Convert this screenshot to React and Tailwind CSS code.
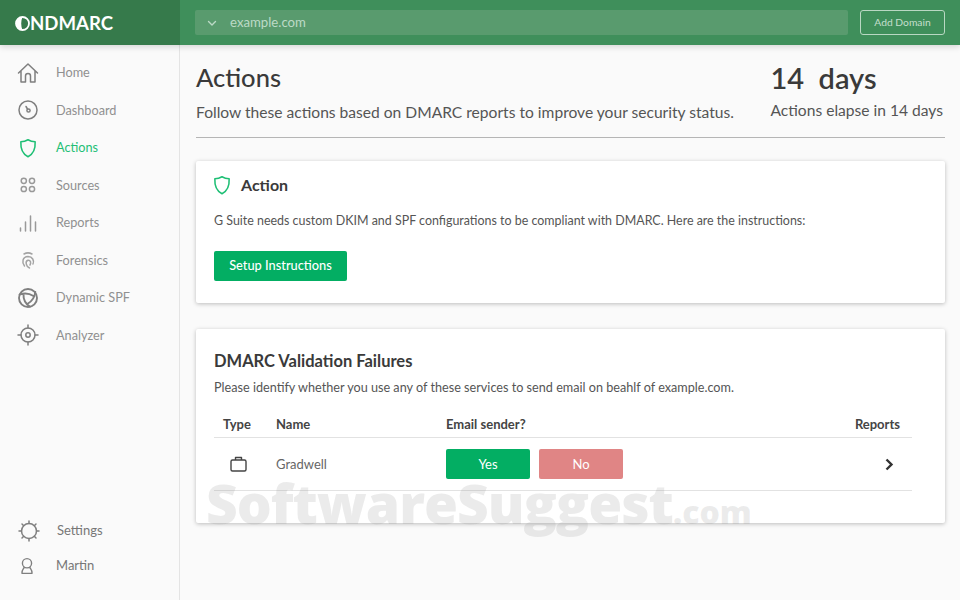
import React from "react";

const I = ({ children, className = "", size = 24, sw = 1.5 }) => (
  <svg width={size} height={size} viewBox="0 0 24 24" fill="none" stroke="currentColor" strokeWidth={sw} strokeLinecap="round" strokeLinejoin="round" className={className}>
    {children}
  </svg>
);

const Shield = ({ size = 24, className = "" }) => (
  <I size={size} sw={1.7} className={`text-[#1fbf75] ${className}`}>
    <path d="M12 3 C9.5 4.6 7 5.2 4.2 5.2 C3.8 12.5 6 18.5 12 21.5 C18 18.5 20.2 12.5 19.8 5.2 C17 5.2 14.5 4.6 12 3 Z" />
  </I>
);

const icons = {
  Home: <path d="M2.5 12 L12 3 L21.5 12 M5 10 V21 H9.5 V15 A2.5 2.5 0 0 1 14.5 15 V21 H19 V10" />,
  Dashboard: (<><circle cx="12" cy="12" r="9" /><circle cx="12.5" cy="12.5" r="1.6" /><path d="M11.5 11 L10 8.5" /></>),
  Actions: null,
  Sources: (<><circle cx="7.8" cy="7.8" r="2.6" /><circle cx="16" cy="7.8" r="2.6" /><circle cx="7.8" cy="16" r="2.6" /><circle cx="16" cy="16" r="2.6" /></>),
  Reports: <path d="M4.5 20 V17 M9.5 20 V11 M14.5 20 V5 M19.5 20 V11" />,
  Forensics: (<><path d="M8 6 C10.5 4.6 13.5 4.6 16 6" /><path d="M8.5 18 C5.5 14 6.5 9 12 8.6 C16.5 8.6 18.5 12.5 17 16" /><path d="M13.5 20 C10 18.5 8.8 13 12 12.2 C14.8 12 15.2 15 14 17" /></>),
  "Dynamic SPF": (<><circle cx="12" cy="12" r="9" /><path d="M3.6 8.6 Q11 6 17.5 10 M19.3 6 Q18.5 13.5 12 17.5 M14 20.8 Q7 16 7.5 8" /></>),
  Analyzer: (<><circle cx="12" cy="12" r="7" /><circle cx="12" cy="12" r="2.2" /><path d="M12 2 V5 M12 19 V22 M2 12 H5 M19 12 H22" /></>),
};

const muted = { Sources: "text-[#999]", Reports: "text-[#999]", Forensics: "text-[#a3a3a3]" };

const nav = ["Home", "Dashboard", "Actions", "Sources", "Reports", "Forensics", "Dynamic SPF", "Analyzer"];

function NavRow({ label, active }) {
  return (
    <div className="h-[37.5px] flex items-center pl-[16px]">
      <div className={`w-[24px] h-[24px] flex items-center justify-center ${active ? "" : muted[label] || "text-[#7f7f7f]"}`}>
        {label === "Actions" ? <Shield size={22} /> : <I sw={label === "Dynamic SPF" ? 1.9 : 1.5}>{icons[label]}</I>}
      </div>
      <span className={`ml-[16px] text-[12.7px] ${active ? "text-[#1fbf75]" : "text-[#909090]"}`}>{label}</span>
    </div>
  );
}

export default function App() {
  return (
    <div className="relative w-[960px] h-[600px] overflow-hidden bg-[#fafafa] text-[#3a3a3a] font-['Lato','Open_Sans',sans-serif]">
      <header className="relative z-10 h-[45px] flex shadow-[0_2px_6px_rgba(0,0,0,0.15)] bg-[#3f8f5b]">
        <div className="w-[180px] bg-[#367a4b] flex items-center pl-[15px] pt-[1px] text-white">
          <svg width="15" height="15" viewBox="0 0 15 15">
            <circle cx="7.5" cy="7.5" r="6.5" fill="none" stroke="#fff" strokeWidth="1.8" />
            <path d="M7.5 1 A6.5 6.5 0 0 0 7.5 14 C5.8 10.5 5.8 4.5 7.5 1 Z" fill="#fff" />
          </svg>
          <span className="text-[18.6px] font-bold leading-none">NDMARC</span>
        </div>
        <div className="flex-1 flex items-center pl-[15px] pr-[15px]">
          <div className="w-[653px] h-[25px] bg-[#599b6e] rounded-[2px] flex items-center pl-[11px] text-[#bcdac6]">
            <svg width="12" height="12" viewBox="0 0 12 12" fill="none" stroke="currentColor" strokeWidth="1.4" strokeLinecap="round" strokeLinejoin="round">
              <path d="M2.5 4.5 L6 8 L9.5 4.5" />
            </svg>
            <span className="ml-[12px] text-[13.2px]">example.com</span>
          </div>
          <button className="ml-[12px] w-[85px] h-[25px] rounded-[3px] border border-[#b9d8c3] text-[#c5dfcd] text-[10.3px] flex items-center justify-center">
            Add Domain
          </button>
        </div>
      </header>

      <div className="flex h-[555px]">
        <aside className="w-[180px] shrink-0 border-r border-[#e4e4e4] bg-[#fafafa] flex flex-col justify-between pt-[9px] pb-[17px]">
          <nav>
            {nav.map((n) => (
              <NavRow key={n} label={n} active={n === "Actions"} />
            ))}
          </nav>
          <div>
            <div className="h-[35px] flex items-center pl-[17px] text-[#7f7f7f]">
              <I>
                <circle cx="12" cy="12" r="7.5" />
                <path d="M12 2 V4.5 M12 19.5 V22 M2 12 H4.5 M19.5 12 H22 M5 5 L6.7 6.7 M17.3 17.3 L19 19 M5 19 L6.7 17.3 M17.3 6.7 L19 5" />
              </I>
              <span className="ml-[16px] text-[13px] text-[#777]">Settings</span>
            </div>
            <div className="h-[35px] flex items-center pl-[16px] text-[#7f7f7f]">
              <I size={22}>
                <circle cx="12" cy="9" r="5" />
                <path d="M9 13.5 C8 15.5 6.5 16 6.5 20 M15 13.5 C16 15.5 17.5 16 17.5 20 M6.5 20 H17.5" />
              </I>
              <span className="ml-[18px] text-[13px] text-[#777]">Martin</span>
            </div>
          </div>
        </aside>

        <main className="flex-1 pl-[16px] pr-[15px]">
          <div className="h-[93px] border-b border-[#b5b5b5] flex justify-between">
            <div>
              <h1 className="text-[25.5px] leading-[32px] mt-[16px] font-medium text-[#3a3a3a]">Actions</h1>
              <p className="text-[15.6px] leading-[20px] mt-[9px] text-[#555]">Follow these actions based on DMARC reports to improve your security status.</p>
            </div>
            <div className="pr-[2px]">
              <div className="text-[29px] leading-[32px] mt-[17px] font-semibold text-[#3a3a3a] whitespace-pre">14  days</div>
              <div className="text-[15.6px] leading-[20px] mt-[6px] text-[#555]">Actions elapse in 14 days</div>
            </div>
          </div>

          <section className="mt-[23px] h-[142px] bg-white rounded-[2px] shadow-[0_1px_4px_rgba(0,0,0,0.25)] px-[18px] pt-[13px]">
            <div className="flex items-center h-[22px]">
              <Shield size={22} className="-ml-[3px]" />
              <h2 className="ml-[8px] text-[16px] font-bold text-[#3a3a3a]">Action</h2>
            </div>
            <p className="mt-[16px] text-[12.45px] leading-[18px] text-[#555]">
              G Suite needs custom DKIM and SPF configurations to be compliant with DMARC. Here are the instructions:
            </p>
            <button className="mt-[21px] w-[133px] h-[30px] rounded-[2px] bg-[#03ae63] text-white text-[12.8px] font-medium flex items-center justify-center">
              Setup Instructions
            </button>
          </section>

          <section className="mt-[26px] h-[194px] bg-white rounded-[2px] shadow-[0_1px_4px_rgba(0,0,0,0.25)] px-[18px] pt-[22px]">
            <h2 className="text-[16.5px] leading-[20px] font-bold text-[#3a3a3a]">DMARC Validation Failures</h2>
            <p className="mt-[8px] text-[12.65px] leading-[18px] text-[#555]">
              Please identify whether you use any of these services to send email on beahlf of example.com.
            </p>
            <div className="w-[698px] mt-[11px]">
              <div className="h-[30px] pt-[4px] border-b border-[#e2e2e2] flex items-center text-[13px] font-bold text-[#444]">
                <span className="w-[62px] pl-[9px]">Type</span>
                <span className="w-[170px]">Name</span>
                <span className="flex-1">Email sender?</span>
                <span className="pr-[12px]">Reports</span>
              </div>
              <div className="h-[53px] border-b border-[#e2e2e2] flex items-center text-[13px]">
                <span className="w-[62px] pl-[15px] text-[#444]">
                  <svg width="19" height="19" viewBox="0 0 19 19" fill="none" stroke="currentColor" strokeWidth="1.4" strokeLinejoin="round">
                    <rect x="2" y="5" width="15" height="11" rx="1.5" />
                    <path d="M6.5 5 V2.5 H12.5 V5" />
                  </svg>
                </span>
                <span className="w-[170px] pt-[2px] text-[#666]">Gradwell</span>
                <button className="w-[84px] h-[30px] pt-[1px] rounded-[2px] bg-[#03ae63] text-white">Yes</button>
                <button className="ml-[9px] w-[84px] h-[30px] pt-[1px] rounded-[2px] bg-[#e08585] text-white">No</button>
                <span className="ml-auto pr-[16px] text-[#333]">
                  <svg width="13" height="13" viewBox="0 0 13 13" fill="none" stroke="currentColor" strokeWidth="2.4">
                    <path d="M3.5 1.5 L8.5 6.5 L3.5 11.5" />
                  </svg>
                </span>
              </div>
            </div>
          </section>
        </main>
      </div>

      <div className="absolute left-[206px] top-[465px] flex items-baseline font-['Open_Sans',sans-serif] font-extrabold text-[rgba(150,150,150,0.19)] pointer-events-none whitespace-nowrap">
        <span className="text-[55px] leading-[76px] tracking-[-1px]">SoftwareSuggest</span>
        <span className="text-[32px]">.com</span>
      </div>
    </div>
  );
}
